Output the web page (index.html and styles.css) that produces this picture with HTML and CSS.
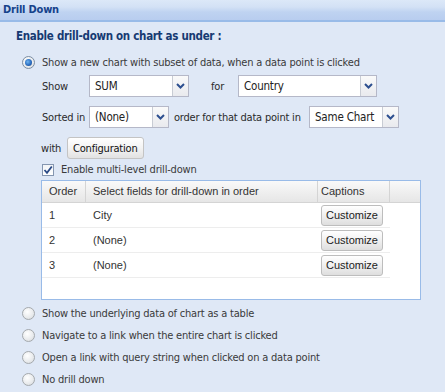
FILE: index.html
```html
<!DOCTYPE html>
<html lang="en">
<head>
    <meta charset="UTF-8">
    <title>Drill Down</title>
    <link rel="stylesheet" href="styles.css">
</head>
<body>
    <div class="panel">
        <div class="panel-header">Drill Down</div>
        <div class="panel-body">
            <div class="title">Enable drill-down on chart as under :</div>

            <div class="option option-first">
                <span class="radio checked"></span>
                <span>Show a new chart with subset of data, when a data point is clicked</span>
            </div>

            <div class="sub">
                <div class="row">
                    <span class="label">Show</span>
                    <div class="combo combo-sum">
                        <span class="combo-text">SUM</span>
                        <span class="combo-btn"><svg width="9" height="6" viewBox="0 0 9 6"><path d="M1 1 L4.5 4.5 L8 1" fill="none" stroke="#2d4f8f" stroke-width="2"/></svg></span>
                    </div>
                    <span class="label-for">for</span>
                    <div class="combo combo-field">
                        <span class="combo-text">Country</span>
                        <span class="combo-btn"><svg width="9" height="6" viewBox="0 0 9 6"><path d="M1 1 L4.5 4.5 L8 1" fill="none" stroke="#2d4f8f" stroke-width="2"/></svg></span>
                    </div>
                </div>

                <div class="row">
                    <span class="label">Sorted in</span>
                    <div class="combo combo-order">
                        <span class="combo-text">(None)</span>
                        <span class="combo-btn"><svg width="9" height="6" viewBox="0 0 9 6"><path d="M1 1 L4.5 4.5 L8 1" fill="none" stroke="#2d4f8f" stroke-width="2"/></svg></span>
                    </div>
                    <span class="label-mid">order for that data point in</span>
                    <div class="combo combo-target">
                        <span class="combo-text">Same Chart</span>
                        <span class="combo-btn"><svg width="9" height="6" viewBox="0 0 9 6"><path d="M1 1 L4.5 4.5 L8 1" fill="none" stroke="#2d4f8f" stroke-width="2"/></svg></span>
                    </div>
                </div>

                <div class="row">
                    <span class="label-with">with</span>
                    <button class="btn">Configuration</button>
                </div>

                <div class="check-row">
                    <span class="checkbox"><svg width="10" height="10" viewBox="0 0 10 10"><path d="M1.5 5 L4 7.8 L8.8 1.5" fill="none" stroke="#2a4a86" stroke-width="1.8"/></svg></span>
                    <span>Enable multi-level drill-down</span>
                </div>

                <div class="grid">
                    <div class="grid-head">
                        <div class="cell col-order">Order</div>
                        <div class="cell col-field">Select fields for drill-down in order</div>
                        <div class="cell col-caption">Captions</div>
                        <div class="cell col-fill"></div>
                    </div>
                    <div class="grid-row">
                        <div class="cell col-order">1</div>
                        <div class="cell col-field">City</div>
                        <div class="cell col-caption"><button class="btn-small">Customize</button></div>
                    </div>
                    <div class="grid-row">
                        <div class="cell col-order">2</div>
                        <div class="cell col-field">(None)</div>
                        <div class="cell col-caption"><button class="btn-small">Customize</button></div>
                    </div>
                    <div class="grid-row">
                        <div class="cell col-order">3</div>
                        <div class="cell col-field">(None)</div>
                        <div class="cell col-caption"><button class="btn-small">Customize</button></div>
                    </div>
                </div>
            </div>

            <div class="options">
                <div class="option"><span class="radio"></span><span>Show the underlying data of chart as a table</span></div>
                <div class="option"><span class="radio"></span><span>Navigate to a link when the entire chart is clicked</span></div>
                <div class="option"><span class="radio"></span><span>Open a link with query string when clicked on a data point</span></div>
                <div class="option"><span class="radio"></span><span>No drill down</span></div>
            </div>
        </div>
    </div>
</body>
</html>
```

FILE: styles.css
```css
* {
    margin: 0;
    padding: 0;
    box-sizing: border-box;
}

body {
    font-family: "DejaVu Sans Condensed", "DejaVu Sans", sans-serif;
    font-stretch: condensed;
    font-size: 11px;
    letter-spacing: -0.2px;
    color: #2a2a2a;
    background: #dfe8f6;
    width: 445px;
    height: 392px;
    overflow: hidden;
}

.panel-header {
    height: 22px;
    padding-left: 3px;
    line-height: 19px;
    font-weight: bold;
    color: #15428b;
    background: linear-gradient(#dce8f8 0%, #d3e1f5 35%, #bfd3f1 60%, #b8cdef 100%);
    border-bottom: 2px solid #99bbe8;
}

.panel-body {
    display: flex;
    flex-direction: column;
}

.title {
    height: 28px;
    line-height: 28px;
    padding-left: 16px;
    font-size: 11.5px;
    letter-spacing: -0.3px;
    font-weight: bold;
    color: #163a72;
}

.option {
    display: flex;
    align-items: center;
    height: 22px;
    padding-left: 22px;
    gap: 7px;
    color: #3a3a3a;
}

.option-first {
    height: 25px;
}

.radio {
    width: 13px;
    height: 13px;
    border-radius: 50%;
    border: 1px solid #a5a9ad;
    background: radial-gradient(circle at 40% 35%, #ffffff 0%, #e8eaec 60%, #cfd3d7 100%);
    display: inline-flex;
    align-items: center;
    justify-content: center;
}

.radio.checked {
    border-color: #7b8da3;
}

.radio.checked::after {
    content: "";
    width: 7px;
    height: 7px;
    border-radius: 50%;
    background: radial-gradient(circle at 40% 40%, #6fb4f0 0%, #2a6cc0 55%, #1b3f78 100%);
}

.sub {
    padding-left: 41px;
    display: flex;
    flex-direction: column;
}

.row {
    display: flex;
    align-items: center;
    height: 22px;
    margin-bottom: 9px;
}

.label {
    width: 48px;
    padding-left: 1px;
}

.label-for {
    width: 49px;
    padding-left: 22px;
}

.label-mid {
    width: 140px;
    padding-left: 5px;
}

.label-with {
    width: 26px;
}

.combo {
    display: flex;
    height: 22px;
    border: 1px solid #b5b8c8;
    background: #fff;
}

.combo-text {
    flex: 1;
    padding-left: 5px;
    line-height: 20px;
    font-size: 11.5px;
    color: #222;
    white-space: nowrap;
    overflow: hidden;
}

.combo-btn {
    width: 16px;
    display: flex;
    align-items: center;
    justify-content: center;
    border-left: 1px solid #c8ccd4;
    background: linear-gradient(#fafafa, #e9eaee);
}

.combo-sum { width: 100px; }
.combo-field { width: 139px; }
.combo-order { width: 80px; }
.combo-target { width: 90px; }

.btn {
    height: 22px;
    padding: 0 5px;
    font-family: inherit;
    font-stretch: condensed;
    font-size: 11px;
    letter-spacing: -0.2px;
    color: #111;
    border: 1px solid #c4c4c4;
    border-radius: 3px;
    background: linear-gradient(#ffffff 0%, #f3f3f3 50%, #e2e2e2 100%);
}

.check-row {
    display: flex;
    align-items: center;
    height: 21px;
    margin-top: -9px;
    gap: 7px;
    padding-left: 1px;
    color: #3a3a3a;
}

.checkbox {
    width: 12px;
    height: 12px;
    border: 1px solid #8596b0;
    background: linear-gradient(#f2f4f7, #ffffff);
    display: inline-flex;
    align-items: center;
    justify-content: center;
}

.grid {
    width: 380px;
    height: 120px;
    border: 1px solid #99bbe8;
    background: #fff;
    font-family: "Liberation Sans", Arial, sans-serif;
    font-stretch: normal;
    font-size: 11px;
    letter-spacing: 0;
    color: #333;
}

.grid-head {
    display: flex;
    height: 22px;
    background: linear-gradient(#f9f9f9, #e6e6e6);
    border-bottom: 1px solid #d4d4d4;
}

.grid-head .cell {
    border-right: 1px solid #d4d4d4;
    line-height: 21px;
}

.grid-head .col-fill {
    flex: 1;
    border-right: none;
}

.grid-row {
    display: flex;
    width: 348px;
    height: 25px;
    border-bottom: 1px solid #ededed;
    align-items: center;
}

.cell {
    padding-left: 7px;
    white-space: nowrap;
}

.col-order { width: 44px; }
.col-field { width: 232px; }
.col-caption { width: 72px; padding-left: 3px; }

.btn-small {
    height: 21px;
    width: 62px;
    font-family: "Liberation Sans", Arial, sans-serif;
    font-size: 11px;
    color: #222;
    border: 1px solid #bdbdbd;
    border-radius: 3px;
    background: linear-gradient(#ffffff 0%, #f0f0f0 50%, #dedede 100%);
}

.options {
    margin-top: 2px;
    display: flex;
    flex-direction: column;
}
```
